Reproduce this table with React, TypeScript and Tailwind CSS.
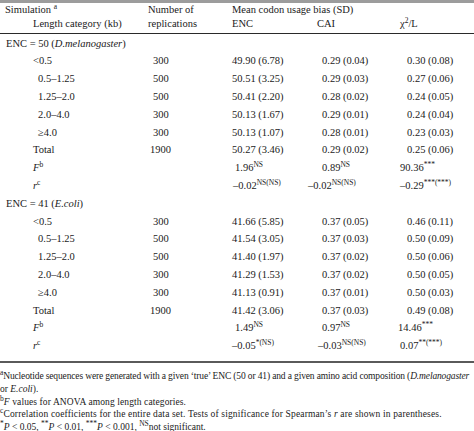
import React from "react";

type Cell = { c: React.ReactNode; p: string };

const Sup = ({ children }: { children: React.ReactNode }) => (
  <sup className="text-[7.5px] -top-[4px]">{children}</sup>
);

const Row = ({ cells }: { cells: Cell[] }) => (
  <div className="grid grid-cols-[148px_84px_73px_93px_76px] h-[17.8px] items-center whitespace-nowrap">
    {cells.map((cell, i) => (
      <div key={i} className={cell.p}>
        {cell.c}
      </div>
    ))}
  </div>
);

type D = [string, string, string, string, string, string];

const melRows: D[] = [
  ["<0.5", "300", "49.90 (6.78)", "0.29 (0.04)", "0.30 (0.08)", "pl-[33px]"],
  ["0.5–1.25", "500", "50.51 (3.25)", "0.29 (0.03)", "0.27 (0.06)", "pl-[38px]"],
  ["1.25–2.0", "500", "50.41 (2.20)", "0.28 (0.02)", "0.24 (0.05)", "pl-[38px]"],
  ["2.0–4.0", "300", "50.13 (1.67)", "0.29 (0.01)", "0.24 (0.04)", "pl-[38px]"],
  ["≥4.0", "300", "50.13 (1.07)", "0.28 (0.01)", "0.23 (0.03)", "pl-[38px]"],
];

const coliRows: D[] = [
  ["<0.5", "300", "41.66 (5.85)", "0.37 (0.05)", "0.46 (0.11)", "pl-[33px]"],
  ["0.5–1.25", "500", "41.54 (3.05)", "0.37 (0.03)", "0.50 (0.09)", "pl-[38px]"],
  ["1.25–2.0", "500", "41.40 (1.97)", "0.37 (0.02)", "0.50 (0.06)", "pl-[38px]"],
  ["2.0–4.0", "300", "41.29 (1.53)", "0.37 (0.02)", "0.50 (0.05)", "pl-[38px]"],
  ["≥4.0", "300", "41.13 (0.91)", "0.37 (0.01)", "0.50 (0.03)", "pl-[38px]"],
];

const dataRow = (d: D, k: string) => (
  <Row
    key={k}
    cells={[
      { c: d[0], p: d[5] },
      { c: d[1], p: "pl-[5px]" },
      { c: d[2], p: "pl-0" },
      { c: d[3], p: "pl-[17px]" },
      { c: d[4], p: "pl-[9px]" },
    ]}
  />
);

export default function App() {
  return (
    <div className="w-[474px] h-[431px] bg-white text-[#1a1a1a] font-['Liberation_Serif',serif] text-[10.5px] leading-none overflow-hidden">
      <div className="h-[3px] bg-[#9c9c9c]" />
      {/* header */}
      <div className="grid grid-cols-[148px_84px_242px] h-[14px] items-center whitespace-nowrap">
        <div className="pl-[5px]">
          Simulation <Sup>a</Sup>
        </div>
        <div>Number of</div>
        <div className="pl-0">Mean codon usage bias (SD)</div>
      </div>
      <div className="grid grid-cols-[148px_84px_73px_93px_76px] h-[15px] items-center whitespace-nowrap">
        <div className="pl-[33px]">Length category (kb)</div>
        <div>replications</div>
        <div>ENC</div>
        <div className="pl-[12px]">CAI</div>
        <div className="pl-[2px]">
          χ<Sup>2</Sup>/L
        </div>
      </div>
      <div className="mt-px h-px bg-[#2a2a2a]" />
      <div className="pt-px">
        <Row
          cells={[
            {
              c: (
                <>
                  ENC = 50 (<i>D.melanogaster</i>)
                </>
              ),
              p: "pl-[6px] col-span-5",
            },
          ]}
        />
        {melRows.map((d, i) => dataRow(d, "m" + i))}
        <Row
          cells={[
            { c: "Total", p: "pl-[33px]" },
            { c: "1900", p: "pl-[2px]" },
            { c: "50.27 (3.46)", p: "pl-0" },
            { c: "0.29 (0.02)", p: "pl-[17px]" },
            { c: "0.25 (0.06)", p: "pl-[9px]" },
          ]}
        />
        <Row
          cells={[
            {
              c: (
                <>
                  <i>F</i>
                  <Sup>b</Sup>
                </>
              ),
              p: "pl-[33px]",
            },
            { c: "", p: "" },
            {
              c: (
                <>
                  1.96<Sup>NS</Sup>
                </>
              ),
              p: "pl-[3px]",
            },
            {
              c: (
                <>
                  0.89<Sup>NS</Sup>
                </>
              ),
              p: "pl-[17px]",
            },
            {
              c: (
                <>
                  90.36<Sup>***</Sup>
                </>
              ),
              p: "pl-[2px]",
            },
          ]}
        />
        <Row
          cells={[
            {
              c: (
                <>
                  <i>r</i>
                  <Sup>c</Sup>
                </>
              ),
              p: "pl-[33px]",
            },
            { c: "", p: "" },
            {
              c: (
                <>
                  –0.02<Sup>NS(NS)</Sup>
                </>
              ),
              p: "pl-[1px]",
            },
            {
              c: (
                <>
                  –0.02<Sup>NS(NS)</Sup>
                </>
              ),
              p: "pl-[3px]",
            },
            {
              c: (
                <>
                  –0.29<Sup>***(***)</Sup>
                </>
              ),
              p: "pl-[2px]",
            },
          ]}
        />
        <Row
          cells={[
            {
              c: (
                <>
                  ENC = 41 (<i>E.coli</i>)
                </>
              ),
              p: "pl-[6px] col-span-5",
            },
          ]}
        />
        {coliRows.map((d, i) => dataRow(d, "c" + i))}
        <Row
          cells={[
            { c: "Total", p: "pl-[33px]" },
            { c: "1900", p: "pl-[2px]" },
            { c: "41.42 (3.06)", p: "pl-0" },
            { c: "0.37 (0.03)", p: "pl-[17px]" },
            { c: "0.49 (0.08)", p: "pl-[9px]" },
          ]}
        />
        <Row
          cells={[
            {
              c: (
                <>
                  <i>F</i>
                  <Sup>b</Sup>
                </>
              ),
              p: "pl-[33px]",
            },
            { c: "", p: "" },
            {
              c: (
                <>
                  1.49<Sup>NS</Sup>
                </>
              ),
              p: "pl-[3px]",
            },
            {
              c: (
                <>
                  0.97<Sup>NS</Sup>
                </>
              ),
              p: "pl-[17px]",
            },
            {
              c: (
                <>
                  14.46<Sup>***</Sup>
                </>
              ),
              p: "pl-0",
            },
          ]}
        />
        <Row
          cells={[
            {
              c: (
                <>
                  <i>r</i>
                  <Sup>c</Sup>
                </>
              ),
              p: "pl-[33px]",
            },
            { c: "", p: "" },
            {
              c: (
                <>
                  –0.05<Sup>*(NS)</Sup>
                </>
              ),
              p: "pl-0",
            },
            {
              c: (
                <>
                  –0.03<Sup>NS(NS)</Sup>
                </>
              ),
              p: "pl-[13px]",
            },
            {
              c: (
                <>
                  0.07<Sup>**(***)</Sup>
                </>
              ),
              p: "pl-[2px]",
            },
          ]}
        />
      </div>
      <div className="mt-[6px] h-[2px] bg-[#5a5a5a]" />
      <div className="mt-[7px] text-[9.5px] leading-[12.6px] whitespace-nowrap">
        <div className="tracking-[-0.14px]">
          <Sup>a</Sup>Nucleotide sequences were generated with a given ‘true’ ENC (50 or 41) and a given amino acid
          composition (<i>D.melanogaster</i>
        </div>
        <div>
          or <i>E.coli</i>).
        </div>
        <div className="tracking-[0.1px]">
          <Sup>b</Sup>
          <i>F</i> values for ANOVA among length categories.
        </div>
        <div className="tracking-[0.15px]">
          <Sup>c</Sup>Correlation coefficients for the entire data set. Tests of significance for Spearman’s <i>r</i>{" "}
          are shown in parentheses.
        </div>
        <div>
          <Sup>*</Sup>
          <i>P</i> &lt; 0.05, <Sup>**</Sup>
          <i>P</i> &lt; 0.01, <Sup>***</Sup>
          <i>P</i> &lt; 0.001, <Sup>NS</Sup>not significant.
        </div>
      </div>
    </div>
  );
}
